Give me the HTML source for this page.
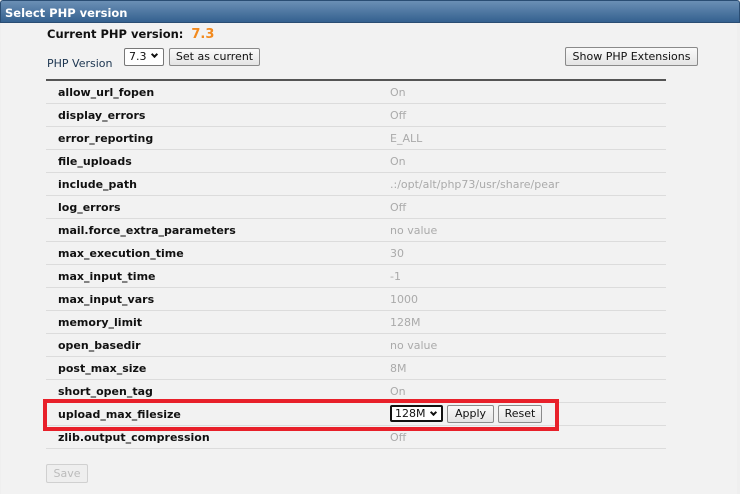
<!DOCTYPE html>
<html><head><style>
*{margin:0;padding:0;box-sizing:border-box}
body{width:740px;height:494px;background:#efefef;font-family:"DejaVu Sans","Liberation Sans",sans-serif;font-size:11px;position:relative;overflow:hidden}
.hdr{position:absolute;left:0;top:0;width:740px;height:23px;background:linear-gradient(#6b8fb5,#34618f);border:1px solid #2a4d73;border-radius:3px 3px 0 0;color:#fff;font-weight:bold;font-size:11.5px;padding:5px 0 0 4px}
.panel{position:absolute;left:1px;top:23px;width:736px;height:471px;background:#f2f2f2}
.abs{position:absolute;white-space:nowrap}
.btn{position:absolute;border:1px solid #8a8a8a;border-radius:2px;background:linear-gradient(#fafafa,#e4e4e4);font-size:11px;text-align:center;color:#111}
.row{position:absolute;left:46px;width:620px;height:23px;border-bottom:1px solid #dcdcdc}
.row .n{position:absolute;left:12px;top:5px;font-weight:bold;color:#111}
.row .v{position:absolute;left:344px;top:5px;color:#aaa}
.chev{display:inline-block;width:5px;height:5px;border-right:2px solid #111;border-bottom:2px solid #111;transform:rotate(45deg);margin-left:5px;position:relative;top:-3px}
</style></head><body>
<div class="hdr">Select PHP version</div>
<div class="panel"></div>
<div class="abs" style="left:47px;top:27px;font-weight:bold;font-size:11.5px;color:#111">Current PHP version: <span style="color:#f28a1e;font-size:13px;margin-left:4px">7.3</span></div>
<div class="abs" style="left:47px;top:57px;color:#1c3550">PHP Version</div>
<div class="btn" style="left:124px;top:48px;width:40px;height:18px;background:#fff;text-align:left;padding:1px 0 0 4px;border-color:#777">7.3<span class="chev"></span></div>
<div class="btn" style="left:169px;top:48px;width:91px;height:18px;padding-top:1px">Set as current</div>
<div class="btn" style="left:565px;top:47px;width:133px;height:19px;padding-top:2px">Show PHP Extensions</div>
<div class="abs" style="left:46px;top:79px;width:620px;height:2px;background:#555"></div>
<div class="row" style="top:81px"><span class="n">allow_url_fopen</span><span class="v">On</span></div>
<div class="row" style="top:104px"><span class="n">display_errors</span><span class="v">Off</span></div>
<div class="row" style="top:127px"><span class="n">error_reporting</span><span class="v">E_ALL</span></div>
<div class="row" style="top:150px"><span class="n">file_uploads</span><span class="v">On</span></div>
<div class="row" style="top:173px"><span class="n">include_path</span><span class="v">.:/opt/alt/php73/usr/share/pear</span></div>
<div class="row" style="top:196px"><span class="n">log_errors</span><span class="v">Off</span></div>
<div class="row" style="top:219px"><span class="n">mail.force_extra_parameters</span><span class="v">no value</span></div>
<div class="row" style="top:242px"><span class="n">max_execution_time</span><span class="v">30</span></div>
<div class="row" style="top:265px"><span class="n">max_input_time</span><span class="v">-1</span></div>
<div class="row" style="top:288px"><span class="n">max_input_vars</span><span class="v">1000</span></div>
<div class="row" style="top:311px"><span class="n">memory_limit</span><span class="v">128M</span></div>
<div class="row" style="top:334px"><span class="n">open_basedir</span><span class="v">no value</span></div>
<div class="row" style="top:357px"><span class="n">post_max_size</span><span class="v">8M</span></div>
<div class="row" style="top:380px"><span class="n">short_open_tag</span><span class="v">On</span></div>
<div class="row" style="top:403px"><span class="n">upload_max_filesize</span></div>
<div class="row" style="top:426px"><span class="n">zlib.output_compression</span><span class="v">Off</span></div>
<div class="abs" style="left:43px;top:399px;width:516px;height:32px;border:4px solid #e8202a"></div>
<div class="btn" style="left:390px;top:405px;width:53px;height:17px;background:#fff;border:2px solid #111;text-align:left;padding-left:3px;line-height:13px">128M<span class="chev" style="top:-2px"></span></div>
<div class="btn" style="left:447px;top:405px;width:47px;height:18px;padding-top:1px">Apply</div>
<div class="btn" style="left:498px;top:405px;width:44px;height:18px;padding-top:1px">Reset</div>
<div class="btn" style="left:46px;top:464px;width:42px;height:19px;color:#bbb;border-color:#d0d0d0;background:#eee;padding-top:2px">Save</div>
</body></html>
